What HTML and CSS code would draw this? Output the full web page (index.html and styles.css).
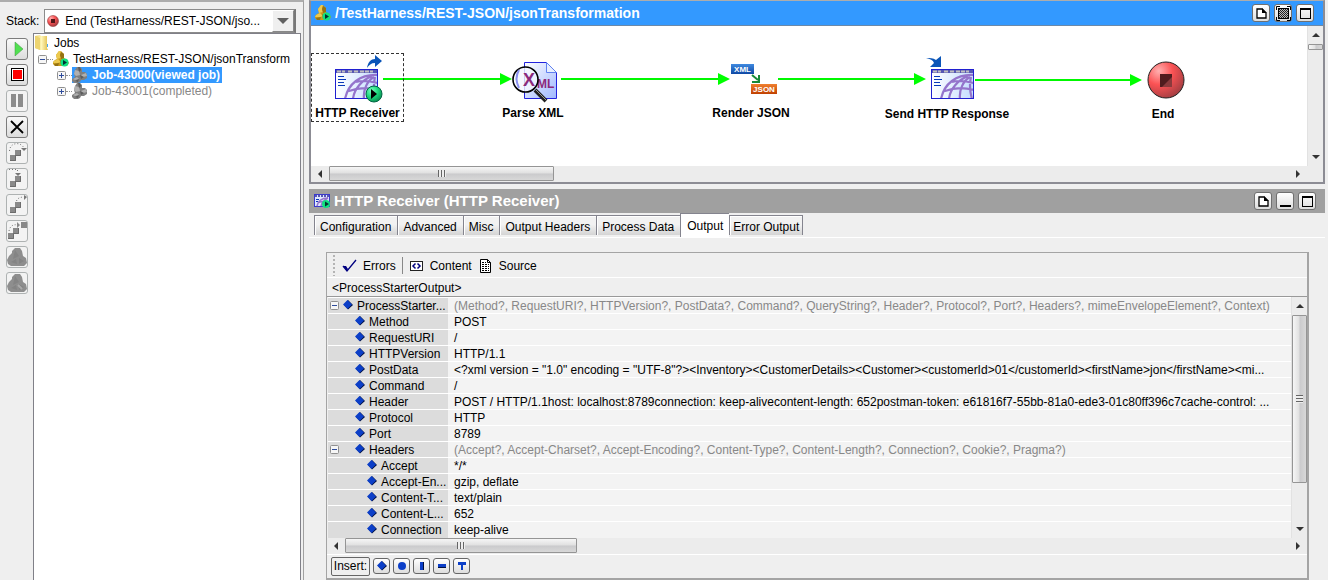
FILE: index.html
```html
<!DOCTYPE html>
<html lang="en">
<head>
    <meta charset="UTF-8">
    <meta name="viewport" content="width=device-width, initial-scale=1.0">
    <title>Test - jsonTransformation</title>
    <link rel="stylesheet" href="styles.css">
</head>
<body>

<!-- Shared icons -->
<svg class="sprite" aria-hidden="true">
    <defs>
        <radialGradient id="redBall" cx="30%" cy="25%" r="85%">
            <stop offset="0" stop-color="#ffb0b0"/>
            <stop offset="0.45" stop-color="#fb5254"/>
            <stop offset="1" stop-color="#9c3c40"/>
        </radialGradient>
        <radialGradient id="greenBall" cx="35%" cy="30%" r="80%">
            <stop offset="0" stop-color="#7dffc0"/>
            <stop offset="0.5" stop-color="#19d87c"/>
            <stop offset="1" stop-color="#0a8048"/>
        </radialGradient>
        <linearGradient id="pageFill" x1="0" y1="0" x2="1" y2="1">
            <stop offset="0" stop-color="#ffffff"/>
            <stop offset="1" stop-color="#9fb8ff"/>
        </linearGradient>
        <linearGradient id="windowFill" x1="0" y1="0" x2="1" y2="0">
            <stop offset="0" stop-color="#ffffff"/>
            <stop offset="1" stop-color="#c3dcff"/>
        </linearGradient>
        <linearGradient id="blueTag" x1="0" y1="0" x2="0" y2="1">
            <stop offset="0" stop-color="#3f8ae0"/>
            <stop offset="1" stop-color="#0f48a4"/>
        </linearGradient>
        <linearGradient id="orangeTag" x1="0" y1="0" x2="0" y2="1">
            <stop offset="0" stop-color="#f08030"/>
            <stop offset="1" stop-color="#c04000"/>
        </linearGradient>
        <linearGradient id="folderFill" x1="0" y1="0" x2="1" y2="0">
            <stop offset="0" stop-color="#e6c95c"/>
            <stop offset="0.5" stop-color="#fff6b8"/>
            <stop offset="1" stop-color="#e0bd4a"/>
        </linearGradient>
        <clipPath id="windowClip"><rect x="1" y="4" width="41" height="25"/></clipPath>
    </defs>

    <symbol id="process-gold" viewBox="0 0 16 16">
        <path d="M6 0h2l3 3v4l3 2 2 3-2 3H2l-2-2v-2l2-2 2-1-1-4z" fill="#c79a1c"/>
        <path d="M6 0h2l-1 4 1 3-4 1-1-4zM1 10l4-2 3 3-3 1H0z" fill="#ecc94e"/>
        <path d="M8 1l3 2v4l-3 1-1-4zM7 9l1 5 2-3zM1 13l5-1-1 3H2z" fill="#957212"/>
        <circle cx="11.500" cy="11.500" r="4" fill="#10e080"/>
        <path d="M10 9l4 2.500-4 2.500z" fill="#033"/>
    </symbol>
    <symbol id="process-gray" viewBox="0 0 16 16">
        <path d="M5 0h3l2 2v3h3l2 2v4l-3 2H9l-1 2-2 1H2l-2-2v-2l3-2-1-3 1-4z" fill="#808080"/>
        <path d="M3 3l4 1 1 4-4 1-2-2zM9 8l5-2 1 3-4 1zM1 12l4-2 2 2-4 1z" fill="#b0b0b0"/>
        <path d="M6 0h2l1 3-2 2zM8 8l4 2-3 2zM3 14l4-2-1 3z" fill="#5c5c5c"/>
    </symbol>
    <symbol id="process-off" viewBox="0 0 20 20">
        <path d="M8 1h5l2 3 1 5 3 2 1 5-3 3H4l-3-2-1-4 2-4 3-3V4z" fill="#8e8e8e"/>
        <path d="M8 3l4 6-6 3zM12 11l5 3-5 3zM4 15l5-3 1 5z" fill="#848484"/>
    </symbol>
    <symbol id="window" viewBox="0 0 43 30">
        <rect x="0.500" y="0.500" width="42" height="29" fill="url(#windowFill)" stroke="#2020d0"/>
        <rect x="1" y="1" width="41" height="3" fill="#5757b4"/>
        <path d="M2 2.500h8M13 2.500h4M19 2.500h4M25 2.500h13" stroke="#c0c0c0" stroke-width="2" stroke-dasharray="4 1"/>
        <path d="M3 7.500h6M3 10.500h8M3 13.500h6M3 16.500h7" stroke="#0838b8"/>
        <g clip-path="url(#windowClip)" fill="none" stroke="#9474cc" stroke-width="2.200">
            <path d="M10 30C13 15 25 5 43 6M18 30c1-10 9-19 19-23M29 30c-1-9 3-18 10-22M14 22c8-3 18-4 29-1M21 13c7-2 14-1 22 1M40 8c-2 8-1 15 1 22"/>
        </g>
    </symbol>
    <symbol id="undock" viewBox="0 0 11 11">
        <path d="M1 1h5l4 4v5H1z" fill="#fff" stroke="#000" stroke-width="1.300"/>
        <path d="M6 0v5h5z"/>
    </symbol>
    <symbol id="maximize" viewBox="0 0 11 11">
        <rect x="0.500" y="1.500" width="10" height="9" fill="none" stroke="#000"/>
        <path d="M0 1h11" stroke="#000" stroke-width="2"/>
    </symbol>
    <symbol id="minimize" viewBox="0 0 11 11"><path d="M0 10h11" stroke="#000" stroke-width="2"/></symbol>
    <symbol id="diamond" viewBox="0 0 10 10">
        <path d="M5 0l5 5-5 4.500L1 5z" fill="#001040"/>
        <path d="M4.500 0L9 4.500 4.500 9 0 4.500z" fill="#0c3fc8"/>
    </symbol>
    <symbol id="minus" viewBox="0 0 9 9">
        <rect x="0.500" y="0.500" width="8" height="8" rx="1" fill="#f6f6f6" stroke="#909090"/>
        <path d="M2 4.500h5" stroke="#2e4c9c"/>
    </symbol>
    <symbol id="plus" viewBox="0 0 9 9">
        <rect x="0.500" y="0.500" width="8" height="8" rx="1" fill="#f6f6f6" stroke="#909090"/>
        <path d="M2 4.500h5M4.500 2v5" stroke="#2e4c9c"/>
    </symbol>
    <symbol id="steps" viewBox="0 0 20 20">
        <path d="M8 7h6v6H8zM3 12h6v6H3z" fill="#8a8a8a"/>
        <path d="M8 12.500h5.500V7M3 17.500h5.500V12" fill="none" stroke="#6c6c6c"/>
    </symbol>
</svg>

<div class="app">
    <aside class="jobs">
        <div class="stack">
            <label for="stack">Stack:</label>
            <div class="select">
                <svg class="select-icon" viewBox="0 0 12 12"><circle cx="6" cy="6" r="5.500" fill="url(#redBall)" stroke="#802020" stroke-width="0.500"/><rect x="4" y="4" width="4" height="4" fill="#501818"/></svg>
                <select id="stack"><option>End (TestHarness/REST-JSON/jso...</option></select>
                <span class="select-arrow"></span>
            </div>
        </div>
        <div class="jobs-body">
            <div class="tools">
                <button aria-label="Resume"><svg viewBox="0 0 20 20"><path d="M8 3v14l8-7z" fill="#50e050" stroke="#409040" stroke-width="0.500"/></svg></button>
                <button aria-label="Stop"><svg viewBox="0 0 20 20"><rect x="4.500" y="3.500" width="12" height="12" fill="#fff" stroke="#000"/><rect x="6" y="5" width="9" height="9" fill="#f00"/></svg></button>
                <button aria-label="Pause" disabled><svg viewBox="0 0 20 20"><path d="M4 3h5v13H4zM11 3h5v13h-5z" fill="#8c8c8c"/></svg></button>
                <button aria-label="Kill"><svg viewBox="0 0 20 20"><path d="M4 4l12 12M16 4L4 16" stroke="#000" stroke-width="1.800"/></svg></button>
                <button aria-label="Step over" disabled><svg viewBox="0 0 20 20"><use href="#steps"/><path d="M2.500 8C3-2 16-1 17 6" fill="none" stroke="#777" stroke-dasharray="1 2"/><path d="M14 5h6l-3 3z" fill="#777"/></svg></button>
                <button aria-label="Step in" disabled><svg viewBox="0 0 20 20"><use href="#steps"/><path d="M2 .5h8M10.500 1v4" fill="none" stroke="#777" stroke-dasharray="1 2"/><path d="M8 4h6l-3 3z" fill="#777"/></svg></button>
                <button aria-label="Step out" disabled><svg viewBox="0 0 20 20"><use href="#steps"/><path d="M9.500 6c1-3 4-4 8-4" fill="none" stroke="#777" stroke-dasharray="1 2"/><path d="M17 0l3 2-3 3z" fill="#777"/></svg></button>
                <button aria-label="Step to" disabled><svg viewBox="0 0 20 20"><use href="#steps" x="-2" width="20" height="20"/><path d="M2 10c1-5 4-7 9-6" fill="none" stroke="#777" stroke-dasharray="1 2"/><path d="M10 1l3 3-3 3zM14 1h6v6h-6z" fill="#888"/></svg></button>
                <button aria-label="Show process" disabled><svg viewBox="0 0 20 20"><use href="#process-off"/></svg></button>
                <button aria-label="Show job" disabled><svg viewBox="0 0 20 20"><use href="#process-off"/><path d="M11 12l4 4" stroke="#aaa" stroke-width="2"/></svg></button>
            </div>
            <ul class="tree">
                <li><svg class="folder" viewBox="0 0 14 16"><path d="M0 1l5-1 1 1h6v12l1 2H5L0 13z" fill="url(#folderFill)"/><path d="M5 3v12l-5-2V1z" fill="#edd470"/><path d="M12 9h1v3h-1z" fill="#4aa8f0"/></svg><span>Jobs</span></li>
                <li class="level-1"><svg class="toggle"><use href="#minus"/></svg><i></i><svg class="icon"><use href="#process-gold"/></svg><span>TestHarness/REST-JSON/jsonTransform</span></li>
                <li class="level-2 selected"><svg class="toggle"><use href="#plus"/></svg><i></i><b><svg class="icon"><use href="#process-gray"/></svg><span>Job-43000(viewed job)</span></b></li>
                <li class="level-2 done"><svg class="toggle"><use href="#plus"/></svg><i></i><svg class="icon"><use href="#process-gray"/></svg><span>Job-43001(completed)</span></li>
            </ul>
        </div>
    </aside>

    <main>
        <section class="process">
            <header class="titlebar">
                <svg class="icon"><use href="#process-gold"/></svg>
                <h1>/TestHarness/REST-JSON/jsonTransformation</h1>
                <div class="window-buttons">
                    <button aria-label="Undock"><svg><use href="#undock"/></svg></button>
                    <button aria-label="Fit to screen"><svg viewBox="0 0 15 15" class="fit"><path d="M.5 4V.5H4M11 .5h3.500V4M.5 11v3.500H4M11 14.500h3.500V11" fill="none" stroke="#000"/><rect x="2.500" y="2.500" width="10" height="10" fill="#bbb" stroke="#000"/><path d="M3 3.500h9M3 5.500h9M3 7.500h9M3 9.500h9M3 11.500h9" stroke="#222" stroke-dasharray="1 1"/><path d="M4 4.500h8M4 6.500h8M4 8.500h8M4 10.500h8" stroke="#222" stroke-dasharray="1 1"/></svg></button>
                    <button aria-label="Maximize"><svg><use href="#maximize"/></svg></button>
                </div>
            </header>
            <div class="canvas-row">
                <div class="canvas">
                    <svg class="links" width="900" height="138">
                        <g fill="none" stroke="#00f800" stroke-width="2">
                            <path d="M72 53h118M250 53h158M467 53h137M664 54h156"/>
                        </g>
                        <path d="M189 47l12 6-12 6zM407 47l12 6-12 6zM603 47l12 6-12 6zM819 48l12 6-12 6z" fill="#00ff00"/>
                    </svg>
                    <div class="node receiver">
                        <svg viewBox="0 0 64 50">
                            <use href="#window" x="9" y="15" width="43" height="30"/>
                            <path d="M41 14c1-6 4-9 8-9V1l7 6-7 6V9c-4 0-6 2-8 5z" fill="#0a55b8"/>
                            <circle cx="48" cy="40" r="8" fill="url(#greenBall)" stroke="#064" stroke-width="1"/>
                            <path d="M45 35v10l6-5z"/>
                        </svg>
                        <span>HTTP Receiver</span>
                    </div>
                    <div class="node parse">
                        <svg viewBox="0 0 64 50">
                            <path d="M23.500 8.500h22l10 10v26h-32z" fill="url(#pageFill)" stroke="#2222dd"/>
                            <path d="M45.500 8.500v10h10z" fill="#e8f0ff" stroke="#6080f0"/>
                            <text x="36" y="34" class="xml-small">ML</text>
                            <circle cx="24.500" cy="25.500" r="12.500" fill="#f4f6ff" fill-opacity="0.800" stroke="#000" stroke-width="1.600"/>
                            <path d="M18 16c-3 5-3 12 0 18" fill="none" stroke="#8b90f0" stroke-width="2"/>
                            <text x="28" y="32" class="xml-big">X</text>
                            <path d="M34 36l11 11" stroke="#222" stroke-width="4"/>
                            <path d="M35 36l10 10" stroke="#999"/>
                        </svg>
                        <span>Parse XML</span>
                    </div>
                    <div class="node render">
                        <svg viewBox="0 0 64 50">
                            <rect x="12" y="10" width="23" height="10" fill="url(#blueTag)"/>
                            <text x="23.500" y="18" class="tag">XML</text>
                            <path d="M33 21l6 5M40 21v7h-7" fill="none" stroke="#168a38" stroke-width="2"/>
                            <rect x="32" y="30" width="26" height="10" fill="url(#orangeTag)"/>
                            <text x="45" y="38" class="tag">JSON</text>
                        </svg>
                        <span>Render JSON</span>
                    </div>
                    <div class="node send">
                        <svg viewBox="0 0 64 50">
                            <use href="#window" x="16" y="14" width="43" height="30"/>
                            <path d="M11 3c4 0 7 0 10 2l5-4v11H15l4-4c-1-3-4-4-8-5z" fill="#0a55b8"/>
                        </svg>
                        <span>Send HTTP Response</span>
                    </div>
                    <div class="node end">
                        <svg viewBox="0 0 64 50">
                            <circle cx="35" cy="25" r="18" fill="url(#redBall)" stroke="#222"/>
                            <rect x="29" y="19" width="12" height="13" fill="#501c1e"/>
                            <path d="M41 22v10H31z" fill="#8a3a3c"/>
                        </svg>
                        <span>End</span>
                    </div>
                </div>
                <div class="scroll vertical">
                    <span class="arrow up"></span><span class="thumb"></span><span class="arrow down"></span>
                </div>
            </div>
            <div class="scroll horizontal">
                <span class="arrow left"></span><span class="thumb"><i class="grip"></i></span><span class="arrow right"></span>
            </div>
        </section>

        <section class="details">
            <header class="titlebar">
                <svg class="icon" viewBox="0 0 16 16"><rect x="0.500" y="1.500" width="15" height="12" fill="#dfe8ff" stroke="#3a3acc"/><path d="M1 3h14" stroke="#5757b4" stroke-width="2" stroke-dasharray="2 1"/><path d="M2 6.500h3M2 8.500h2" stroke="#0838b8"/><path d="M3 13c1-5 5-8 11-8M7 13c1-4 3-6 7-8M4 10c3-2 7-2 10-1" fill="none" stroke="#9474cc" stroke-width="1.500"/><circle cx="12" cy="11" r="4" fill="#10e080"/><path d="M11 8.500l4 2.500-4 2.500z" fill="#033"/></svg>
                <h2>HTTP Receiver (HTTP Receiver)</h2>
                <div class="window-buttons">
                    <button aria-label="Undock"><svg><use href="#undock"/></svg></button>
                    <button aria-label="Minimize"><svg><use href="#minimize"/></svg></button>
                    <button aria-label="Maximize"><svg><use href="#maximize"/></svg></button>
                </div>
            </header>
            <nav class="tabs">
                <button>Configuration</button>
                <button>Advanced</button>
                <button>Misc</button>
                <button>Output Headers</button>
                <button>Process Data</button>
                <button class="active">Output</button>
                <button>Error Output</button>
            </nav>

            <div class="output">
                <div class="output-tools">
                    <span class="handle"></span>
                    <button><svg viewBox="0 0 16 14"><path d="M1 7l4 5L14 1" fill="none" stroke="#000080" stroke-width="1.300"/><path d="M1 7l4 5 1-2-2-3z" fill="#000080"/></svg>Errors</button>
                    <span class="divider"></span>
                    <button><svg viewBox="0 0 16 14"><rect x="1.500" y="2.500" width="12" height="9" fill="#fff" stroke="#222"/><path d="M6.500 4.500L4 7l2.500 2.500M8.500 4.500L11 7 8.500 9.500" fill="none" stroke="#000080" stroke-width="1.500"/></svg>Content</button>
                    <button><svg viewBox="0 0 16 14"><path d="M2.500.5h7l3 3v10h-10z" fill="#fff" stroke="#000"/><path d="M9.500.5v3h3" fill="none" stroke="#000"/><path d="M4 3.500h4M4 5.500h7M4 7.500h7M4 9.500h7M4 11.500h7" stroke="#000" stroke-dasharray="2 1"/></svg>Source</button>
                </div>
                <div class="path">&lt;ProcessStarterOutput&gt;</div>
                <div class="grid-row">
                    <div class="grid">
                        <table>
                            <tr class="schema"><th><svg class="toggle"><use href="#minus"/></svg><svg class="dia"><use href="#diamond"/></svg>ProcessStarter...</th><td>(Method?, RequestURI?, HTTPVersion?, PostData?, Command?, QueryString?, Header?, Protocol?, Port?, Headers?, mimeEnvelopeElement?, Context)</td></tr>
                            <tr class="child"><th><svg class="dia"><use href="#diamond"/></svg>Method</th><td>POST</td></tr>
                            <tr class="child"><th><svg class="dia"><use href="#diamond"/></svg>RequestURI</th><td>/</td></tr>
                            <tr class="child"><th><svg class="dia"><use href="#diamond"/></svg>HTTPVersion</th><td>HTTP/1.1</td></tr>
                            <tr class="child"><th><svg class="dia"><use href="#diamond"/></svg>PostData</th><td>&lt;?xml version = "1.0" encoding = "UTF-8"?&gt;&lt;Inventory&gt;&lt;CustomerDetails&gt;&lt;Customer&gt;&lt;customerId&gt;01&lt;/customerId&gt;&lt;firstName&gt;jon&lt;/firstName&gt;&lt;mi...</td></tr>
                            <tr class="child"><th><svg class="dia"><use href="#diamond"/></svg>Command</th><td>/</td></tr>
                            <tr class="child"><th><svg class="dia"><use href="#diamond"/></svg>Header</th><td>POST / HTTP/1.1host: localhost:8789connection: keep-alivecontent-length: 652postman-token: e61816f7-55bb-81a0-ede3-01c80ff396c7cache-control: ...</td></tr>
                            <tr class="child"><th><svg class="dia"><use href="#diamond"/></svg>Protocol</th><td>HTTP</td></tr>
                            <tr class="child"><th><svg class="dia"><use href="#diamond"/></svg>Port</th><td>8789</td></tr>
                            <tr class="child schema"><th><svg class="toggle"><use href="#minus"/></svg><svg class="dia"><use href="#diamond"/></svg>Headers</th><td>(Accept?, Accept-Charset?, Accept-Encoding?, Content-Type?, Content-Length?, Connection?, Cookie?, Pragma?)</td></tr>
                            <tr class="grandchild"><th><svg class="dia"><use href="#diamond"/></svg>Accept</th><td>*/*</td></tr>
                            <tr class="grandchild"><th><svg class="dia"><use href="#diamond"/></svg>Accept-En...</th><td>gzip, deflate</td></tr>
                            <tr class="grandchild"><th><svg class="dia"><use href="#diamond"/></svg>Content-T...</th><td>text/plain</td></tr>
                            <tr class="grandchild"><th><svg class="dia"><use href="#diamond"/></svg>Content-L...</th><td>652</td></tr>
                            <tr class="grandchild"><th><svg class="dia"><use href="#diamond"/></svg>Connection</th><td>keep-alive</td></tr>
                        </table>
                    </div>
                    <div class="scroll vertical">
                        <span class="arrow up"></span><span class="thumb"><i class="grip"></i></span><span class="arrow down"></span>
                    </div>
                </div>
                <div class="scroll horizontal">
                    <span class="arrow left"></span><span class="thumb"><i class="grip"></i></span><span class="arrow right"></span>
                </div>
                <div class="insert">
                    <button class="insert-label">Insert:</button>
                    <button aria-label="Element"><svg viewBox="0 0 10 10"><use href="#diamond"/></svg></button>
                    <button aria-label="Attribute"><svg viewBox="0 0 10 10"><circle cx="5" cy="5" r="4" fill="#0c3fc8"/></svg></button>
                    <button aria-label="Text"><svg viewBox="0 0 10 10"><path d="M3 1h4v8H3z" fill="#0c3fc8"/><path d="M6.500 1v8" stroke="#001040"/></svg></button>
                    <button aria-label="Comment"><svg viewBox="0 0 10 10"><path d="M1 3h8v4H1z" fill="#0c3fc8"/><path d="M1 6.500h8" stroke="#001040"/></svg></button>
                    <button aria-label="Type"><svg viewBox="0 0 10 10"><path d="M1 1h8v3H6v5H4V4H1z" fill="#0c3fc8"/></svg></button>
                </div>
            </div>
        </section>
    </main>
</div>

</body>
</html>
```

FILE: styles.css
```css
/* General styles */
* {
    box-sizing: border-box;
}

body {
    margin: 0;
    background-color: #efefef;
    color: #000;
    font-family: Arial, "Liberation Sans", sans-serif;
    font-size: 12px;
    line-height: 16px;
}

button, select {
    font: inherit;
    color: inherit;
    padding: 0;
}

svg {
    display: block;
    flex: none;
}

.sprite {
    position: absolute;
    width: 0;
    height: 0;
}

.icon {
    width: 16px;
    height: 16px;
}

.toggle {
    width: 9px;
    height: 9px;
}

.app {
    display: flex;
    min-height: 100vh;
}

/* Jobs panel */
.jobs {
    display: flex;
    flex-direction: column;
    flex: none;
    width: 304px;
    border-top: 2px solid #adadad;
    border-right: 1px solid #a0a0a0;
    padding-right: 2px;
}

.stack {
    display: flex;
    align-items: center;
    gap: 5px;
    height: 31px;
    padding: 6px 5px 0 6px;
}

.select {
    position: relative;
    flex: 1;
    height: 24px;
    background-color: #fff;
    border: 1px solid #8c8c8c;
    border-right: 2px solid #777;
}

.select select {
    width: 100%;
    height: 22px;
    padding: 0 22px 0 20px;
    border: none;
    background: none;
    appearance: none;
}

.select-icon {
    position: absolute;
    left: 2px;
    top: 5px;
    width: 12px;
    height: 12px;
}

.select-arrow {
    position: absolute;
    right: 0;
    top: 0;
    width: 22px;
    height: 22px;
    background-color: #efefef;
    border: 1px solid #fff;
    border-right-color: #888;
    border-bottom-color: #888;
    pointer-events: none;
}

.select-arrow::after {
    content: "";
    position: absolute;
    left: 4px;
    top: 7px;
    border: 6px solid transparent;
    border-top-color: #606060;
    border-bottom: none;
}

.jobs-body {
    display: flex;
    flex: 1;
}

.tools {
    display: flex;
    flex-direction: column;
    gap: 4px;
    width: 33px;
    padding: 5px 0 0 6px;
}

.tools button {
    width: 22px;
    height: 22px;
    border: 1px solid #7c7c7c;
    border-radius: 3px;
    background: linear-gradient(#fafafa, #dcdcdc);
}

.tools button:disabled {
    border-color: #aeb2b2;
    background: #f3f3f3;
}

.tools svg {
    width: 20px;
    height: 20px;
}

.tree {
    flex: 1;
    margin: 0;
    padding: 1px 0 0 1px;
    list-style: none;
    overflow: hidden;
    white-space: nowrap;
    background-color: #fff;
    border: 1px solid #808088;
    border-bottom: none;
}

.tree li, .tree b {
    display: flex;
    align-items: center;
    height: 16px;
}

.tree .folder {
    width: 14px;
    height: 16px;
    margin-right: 5px;
}

.tree i {
    width: 6px;
    border-top: 1px dotted #909090;
}

.tree .level-1 {
    padding-left: 3px;
}

.tree .level-2 {
    padding-left: 22px;
}

.tree .icon {
    margin-right: 4px;
}

.selected b {
    padding-right: 2px;
    color: #fff;
    background-color: #3399ff;
}

.done {
    color: #888;
}

/* Panels on the right */
main {
    display: flex;
    flex-direction: column;
    flex: 1;
    gap: 5px;
    min-width: 0;
    padding: 0 3px 0 5px;
}

.process {
    border: 1px solid #adadad;
    border-left: 2px solid #8c8c94;
    border-right: 2px solid #8c8c94;
    border-bottom: 2px solid #8c8c94;
}

.titlebar {
    display: flex;
    align-items: center;
    gap: 4px;
    height: 25px;
    padding: 0 9px 0 4px;
    color: #fff;
    background-color: #3399ff;
    border-bottom: 1px solid #6c89a8;
}

.titlebar h1, .titlebar h2 {
    flex: 1;
    margin: 0;
    font-size: 14px;
    font-weight: bold;
    white-space: nowrap;
}

.titlebar h2 {
    font-size: 15px;
}

.window-buttons {
    display: flex;
    gap: 4px;
}

.window-buttons button {
    display: grid;
    place-items: center;
    width: 18px;
    height: 18px;
    border: 1px solid #707070;
    border-radius: 3px;
    background: linear-gradient(#fff, #ddd);
}

.window-buttons svg {
    width: 11px;
    height: 11px;
}

.window-buttons .fit {
    width: 15px;
    height: 15px;
}

/* Process diagram */
.canvas-row {
    display: flex;
}

.canvas {
    position: relative;
    flex: 1;
    height: 140px;
    overflow: hidden;
    background-color: #fff;
}

.links {
    position: absolute;
    left: 0;
    top: 0;
}

.node {
    position: absolute;
    top: 28px;
    display: flex;
    flex-direction: column;
    align-items: center;
    gap: 1px;
    width: 130px;
    font-weight: bold;
    white-space: nowrap;
}

.node svg {
    width: 64px;
    height: 50px;
}

.receiver {
    left: 0;
    top: 27px;
    width: 93px;
    height: 69px;
    border: 1px dashed #333;
}

.parse {
    left: 157px;
}

.render {
    left: 375px;
}

.send {
    left: 571px;
    top: 29px;
}

.end {
    left: 787px;
    top: 29px;
}

.xml-big, .xml-small {
    font-weight: bold;
    fill: #8c2a7c;
}

.xml-small {
    font-size: 12px;
}

.xml-big {
    font-size: 18px;
    text-anchor: middle;
}

.tag {
    font-size: 8px;
    font-weight: bold;
    fill: #fff;
    text-anchor: middle;
}

/* Scroll bars */
.scroll {
    display: flex;
    flex: none;
    background-color: #ececec;
}

.scroll.horizontal {
    height: 16px;
    padding-right: 16px;
}

.scroll.vertical {
    flex-direction: column;
    width: 16px;
    border-left: 1px solid #e2e2e2;
}

.arrow {
    display: grid;
    place-items: center;
    flex: none;
    width: 18px;
    height: 16px;
}

.arrow::after {
    content: "";
    border: 4px solid transparent;
}

.vertical .arrow {
    width: 15px;
    height: 18px;
}

.up::after {
    border-bottom-color: #333;
    border-top: none;
}

.down {
    margin-top: auto;
}

.down::after {
    border-top-color: #333;
    border-bottom: none;
}

.left::after {
    border-right-color: #333;
    border-left: none;
}

.right {
    margin-left: auto;
}

.right::after {
    border-left-color: #333;
    border-right: none;
}

.thumb {
    display: grid;
    place-items: center;
    border: 1px solid #959595;
    border-radius: 1px;
}

.horizontal .thumb {
    width: 225px;
    height: 15px;
    background: linear-gradient(#f6f6f6, #e0e0e0 48%, #cacacc 52%, #d8d8d8);
}

.vertical .thumb {
    width: 15px;
    height: 6px;
    background: linear-gradient(to right, #f6f6f6, #e0e0e0 48%, #cacacc 52%, #d8d8d8);
}

.grip {
    width: 8px;
    height: 7px;
    background: repeating-linear-gradient(to right, #666 0 1px, #eee 1px 3px);
}

.vertical .grip {
    width: 7px;
    height: 8px;
    background: repeating-linear-gradient(#666 0 1px, #eee 1px 3px);
}

/* Details panel */
.details {
    display: flex;
    flex-direction: column;
    flex: 1;
}

.details .titlebar {
    height: 24px;
    padding-left: 5px;
    border: none;
    background-color: #a0a0a0;
}

.tabs {
    display: flex;
    align-items: flex-end;
    height: 25px;
    margin-bottom: 14px;
    padding-left: 5px;
    border-bottom: 1px solid #fff;
}

.tabs button {
    height: 20px;
    margin-bottom: 2px;
    padding: 3px 6px 0 5px;
    white-space: nowrap;
    background: linear-gradient(#f2f2f2 45%, #d4d4d4);
    border: 1px solid #84848e;
    border-right: none;
    border-bottom: none;
    box-shadow: inset 1px 1px #fff;
}

.tabs button:last-child {
    padding: 3px 3px 0;
    border-right: 1px solid #84848e;
}

.tabs .active {
    height: 24px;
    margin-bottom: 0;
    padding: 0 6px;
    background: #fff;
}

.output {
    display: flex;
    flex-direction: column;
    flex: 1;
    margin: 0 16px 1px 17px;
    border: 2px solid #a4a4a4;
    border-top-width: 1px;
    border-left-width: 1px;
}

.output-tools {
    display: flex;
    align-items: center;
    gap: 6px;
    height: 25px;
    padding: 1px 0 0 6px;
    border-bottom: 1px solid #fff;
}

.output-tools button {
    display: flex;
    align-items: center;
    gap: 5px;
    border: none;
    background: none;
}

.output-tools svg {
    width: 16px;
    height: 14px;
}

.handle {
    width: 2px;
    height: 21px;
    margin-right: 1px;
    background: repeating-linear-gradient(#b4b4b4 0 2px, #efefef 2px 4px);
}

.divider {
    width: 1px;
    height: 17px;
    background-color: #888;
}

.path {
    height: 19px;
    padding: 2px 5px 0;
    border-bottom: 1px solid #999;
}

.grid-row {
    display: flex;
    flex: 1;
    padding-left: 1px;
}

.grid {
    flex: 1;
    min-width: 0;
    overflow: hidden;
}

.grid table {
    width: 100%;
    table-layout: fixed;
    border-collapse: collapse;
}

.grid th, .grid td {
    height: 16px;
    padding: 1px 0 0;
    line-height: 14px;
    text-align: left;
    font-weight: normal;
    white-space: nowrap;
    overflow: hidden;
    border-top: 1px solid #fff;
}

.grid th {
    position: relative;
    width: 120px;
    padding-left: 29px;
    background-color: #dcdcdc;
}

.grid td {
    padding-left: 6px;
    background-color: #f3f3f3;
}

.grid .toggle {
    position: absolute;
    left: 2px;
    top: 3px;
}

.dia {
    display: inline-block;
    width: 10px;
    height: 10px;
    margin: 0 4px 0 -14px;
}

.grid .child th {
    padding-left: 41px;
}

.grid .grandchild th {
    padding-left: 53px;
}

.schema td {
    color: #888;
}

.output .vertical .thumb {
    height: 168px;
}

.output .horizontal .thumb {
    width: 232px;
}

.output .scroll.horizontal {
    padding-right: 0;
}

.insert {
    display: flex;
    align-items: center;
    gap: 3px;
    height: 24px;
    padding-left: 4px;
    border-top: 1px solid #fff;
}

.insert button {
    display: grid;
    place-items: center;
    width: 17px;
    height: 16px;
    border: 1px solid #666;
    border-radius: 3px;
    background: linear-gradient(#fff, #ddd);
}

.insert .insert-label {
    width: 39px;
    height: 19px;
    border-radius: 2px;
    background: #efefef;
}

.insert svg {
    width: 10px;
    height: 10px;
}
```
